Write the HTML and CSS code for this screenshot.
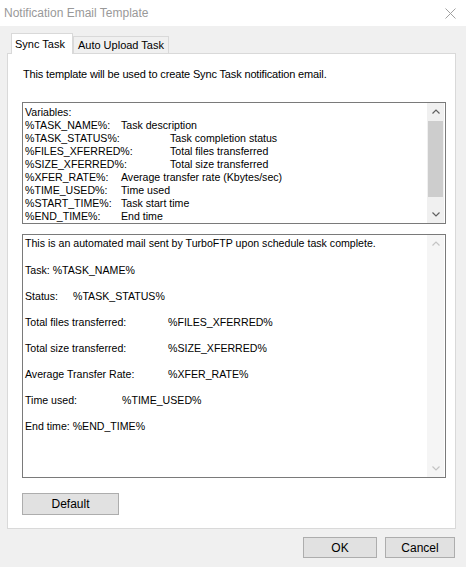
FILE: index.html
```html
<!DOCTYPE html>
<html lang="en">
<head>
    <meta charset="utf-8"/>
    <title>Notification Email Template</title>
    <link rel="stylesheet" href="styles.css">
</head>
<body>
    <div class="titlebar">
        <span class="title">Notification Email Template</span>
        <svg class="close" width="11" height="11" viewBox="0 0 11 11">
            <path d="M0.5 0.5 L10.5 10.5 M10.5 0.5 L0.5 10.5" stroke="#a0a0a0" stroke-width="1" fill="none"/>
        </svg>
    </div>

    <div class="dialog">
        <div class="tabs">
            <div class="tab active">Sync Task</div>
            <div class="tab">Auto Upload Task</div>
        </div>

        <div class="panel">
            <p class="intro">This template will be used to create Sync Task notification email.</p>

            <div class="textbox vars">
                <div class="lines">
                    <div>Variables:</div>
                    <div><span class="key">%TASK_NAME%:</span>Task description</div>
                    <div><span class="key long">%TASK_STATUS%:</span>Task completion status</div>
                    <div><span class="key long">%FILES_XFERRED%:</span>Total files transferred</div>
                    <div><span class="key long">%SIZE_XFERRED%:</span>Total size transferred</div>
                    <div><span class="key">%XFER_RATE%:</span>Average transfer rate (Kbytes/sec)</div>
                    <div><span class="key">%TIME_USED%:</span>Time used</div>
                    <div><span class="key">%START_TIME%:</span>Task start time</div>
                    <div><span class="key">%END_TIME%:</span>End time</div>
                </div>
                <div class="scrollbar">
                    <div class="arrow">
                        <svg width="8" height="5" viewBox="0 0 8 5"><path d="M0.5 4.5 L4 1 L7.5 4.5" stroke="#606060" stroke-width="1.2" fill="none"/></svg>
                    </div>
                    <div class="track"><div class="thumb"></div></div>
                    <div class="arrow">
                        <svg width="8" height="5" viewBox="0 0 8 5"><path d="M0.5 0.5 L4 4 L7.5 0.5" stroke="#606060" stroke-width="1.2" fill="none"/></svg>
                    </div>
                </div>
            </div>

            <div class="textbox template">
                <div class="lines spaced">
                    <div class="first">This is an automated mail sent by TurboFTP upon schedule task complete.</div>
                    <div>Task: %TASK_NAME%</div>
                    <div><span class="label short">Status:</span>%TASK_STATUS%</div>
                    <div><span class="label">Total files transferred:</span>%FILES_XFERRED%</div>
                    <div><span class="label">Total size transferred:</span>%SIZE_XFERRED%</div>
                    <div><span class="label">Average Transfer Rate:</span>%XFER_RATE%</div>
                    <div><span class="label mid">Time used:</span>%TIME_USED%</div>
                    <div>End time: %END_TIME%</div>
                </div>
                <div class="scrollbar disabled">
                    <div class="arrow">
                        <svg width="8" height="5" viewBox="0 0 8 5"><path d="M0.5 4.5 L4 1 L7.5 4.5" stroke="#c4c4c4" stroke-width="1.2" fill="none"/></svg>
                    </div>
                    <div class="track"></div>
                    <div class="arrow">
                        <svg width="8" height="5" viewBox="0 0 8 5"><path d="M0.5 0.5 L4 4 L7.5 0.5" stroke="#c4c4c4" stroke-width="1.2" fill="none"/></svg>
                    </div>
                </div>
            </div>

            <button class="btn default">Default</button>
        </div>

        <div class="footer">
            <button class="btn ok">OK</button>
            <button class="btn cancel">Cancel</button>
        </div>
    </div>
</body>
</html>
```

FILE: styles.css
```css
body {
    margin: 0;
    width: 466px;
    height: 567px;
    overflow: hidden;
    background-color: #f0f0f0;
    font-family: 'Liberation Sans', Arial, sans-serif;
    font-size: 11px;
    color: #000;
}

.titlebar {
    height: 26px;
    background-color: #ffffff;
    display: flex;
    align-items: center;
    justify-content: space-between;
    padding: 0 10px 0 4px;
}

.title {
    color: #999999;
    font-size: 12px;
}

.close {
    display: block;
}

.dialog {
    padding: 7px 10px 0 7px;
}

.tabs {
    display: flex;
    align-items: flex-end;
    padding-left: 4px;
    height: 20px;
}

.tab {
    border: 1px solid #d9d9d9;
    border-bottom: none;
    background-color: #f0f0f0;
    height: 16px;
    line-height: 17px;
    padding: 0 4px 0 4px;
    font-size: 11px;
}

.tab.active {
    background-color: #ffffff;
    height: 20px;
    line-height: 21px;
    position: relative;
    margin-bottom: -1px;
    padding: 0 7px 0 3px;
}

.panel {
    border: 1px solid #d9d9d9;
    background-color: #ffffff;
    height: 476px;
    box-sizing: border-box;
    padding: 0 9px 0 14px;
}

.intro {
    margin: 0;
    padding-top: 12px;
    line-height: 16px;
    padding-left: 1px;
    font-size: 11px;
    letter-spacing: -0.15px;
}

.textbox {
    border: 1px solid #7a7a7a;
    box-sizing: border-box;
    display: flex;
    font-size: 10.6px;
    line-height: 13px;
}

.vars {
    margin-top: 20px;
    height: 122px;
}

.template {
    margin-top: 10px;
    height: 244px;
}

.lines {
    flex: 1;
    padding: 3px 0 0 2px;
    white-space: nowrap;
    overflow: hidden;
}

.lines.spaced {
    padding-top: 2px;
}

.lines.spaced div {
    margin-bottom: 13px;
}

.lines.spaced .first {
    margin-bottom: 14px;
}

.key {
    display: inline-block;
    width: 96px;
}

.key.long {
    width: 145px;
}

.label {
    display: inline-block;
    width: 143px;
}

.label.short {
    width: 48px;
}

.label.mid {
    width: 97px;
}

.scrollbar {
    width: 17px;
    margin-right: 1px;
    background-color: #f0f0f0;
    display: flex;
    flex-direction: column;
}

.scrollbar.disabled {
    background-color: #f5f5f5;
}

.arrow {
    height: 17px;
    display: flex;
    align-items: center;
    justify-content: center;
}

.track {
    flex: 1;
}

.thumb {
    height: 76px;
    margin: 1px 1px 0 1px;
    background-color: #cdcdcd;
}

.btn {
    font-family: 'Liberation Sans', Arial, sans-serif;
    font-size: 12px;
    color: #000;
    background-color: #e1e1e1;
    border: 1px solid #adadad;
    padding: 0;
    height: 21px;
}

.ok {
    width: 74px;
}

.cancel {
    width: 70px;
}

.default {
    margin-top: 15px;
    width: 97px;
    height: 22px;
}

.footer {
    display: flex;
    justify-content: flex-end;
    gap: 8px;
    margin-top: 8px;
    padding-right: 1px;
}
```
